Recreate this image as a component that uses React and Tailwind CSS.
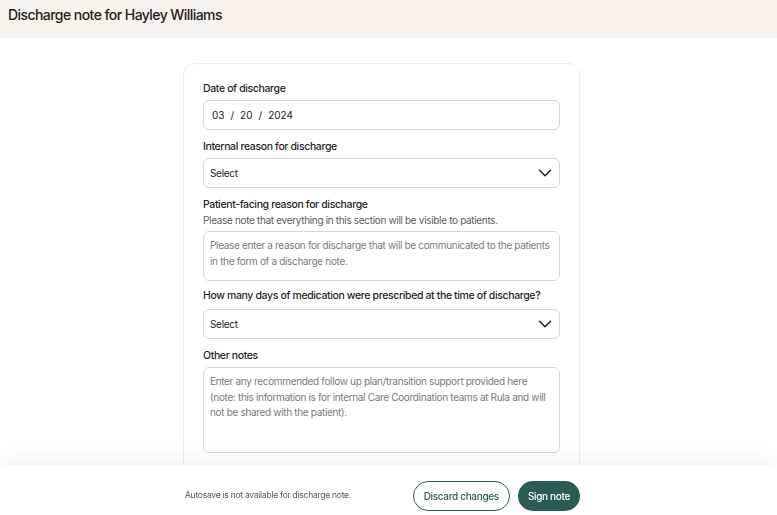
import { ChevronDown } from "lucide-react"

const font = { fontFamily: "Inter, 'Liberation Sans', sans-serif" }

function Label({ children }) {
  return <div className="text-[10.5px] font-medium text-[#1f1f1f] leading-[14px] tracking-[-0.035em]">{children}</div>
}

function SelectBox() {
  return (
    <div className="h-[30px] rounded-md border border-[#d6d6d6] bg-white flex items-center justify-between pl-[6px] pr-[3px]">
      <span className="text-[10px] text-[#222] tracking-[-0.03em]">Select</span>
      <ChevronDown className="w-[22px] h-[22px] text-[#222]" strokeWidth={1.7} />
    </div>
  )
}

export default function App() {
  return (
    <div className="min-h-screen bg-white text-[#222]" style={font}>
      {/* Header */}
      <div className="h-[38px] bg-[#f5f2ef] flex items-center px-[8px]">
        <h1 className="text-[14px] font-medium tracking-[-0.04em] -mt-[9px]">Discharge note for Hayley Williams</h1>
      </div>

      {/* Form card */}
      <div className="flex justify-center pr-[14px] pt-[25px] pb-[80px]">
        <div className="w-[397px] rounded-xl border border-[#ececec] px-[19px] pt-[18px] pb-[20px] flex flex-col">
          <Label>Date of discharge</Label>
          <div className="mt-[4px] h-[30px] rounded-md border border-[#d6d6d6] flex items-center pl-[8px] text-[10px] text-[#222] gap-[6px]">
            <span>03</span><span>/</span><span>20</span><span>/</span><span>2024</span>
          </div>

          <div className="mt-[10px]"><Label>Internal reason for discharge</Label></div>
          <div className="mt-[4px]"><SelectBox /></div>

          <div className="mt-[10px]"><Label>Patient-facing reason for discharge</Label></div>
          <div className="mt-[1px] text-[10px] text-[#5c5c5c] leading-[14px] tracking-[-0.033em]">
            Please note that everything in this section will be visible to patients.
          </div>
          <div className="mt-[4px] h-[50px] rounded-md border border-[#d6d6d6] px-[6px] pt-[5px] text-[10px] leading-[16px] text-[#7a7a7a] tracking-[-0.033em]">
            Please enter a reason for discharge that will be communicated to the patients in the form of a discharge note.
          </div>

          <div className="mt-[8px]"><Label>How many days of medication were prescribed at the time of discharge?</Label></div>
          <div className="mt-[6px]"><SelectBox /></div>

          <div className="mt-[10px]"><Label>Other notes</Label></div>
          <div className="mt-[4px] h-[86px] rounded-md border border-[#d6d6d6] px-[6px] pt-[6px] text-[10px] leading-[15.5px] text-[#7a7a7a] tracking-[-0.033em]">
            Enter any recommended follow up plan/transition support provided here (note: this information is for internal Care Coordination teams at Rula and will not be shared with the patient).
          </div>
        </div>
      </div>

      {/* Footer */}
      <div className="fixed bottom-0 left-0 right-0 h-[50px] bg-white shadow-[0_-8px_18px_rgba(0,0,0,0.045)] flex justify-center pr-[14px] pt-[16px]">
        <div className="w-[397px] flex items-start justify-between">
          <span className="mt-[8px] ml-[2px] text-[8.5px] leading-[12px] text-[#555] tracking-[-0.03em]">Autosave is not available for discharge note.</span>
          <div className="flex items-center gap-[8px]">
            <button className="h-[30px] px-[10px] rounded-full border border-[#2b5b52] text-[10px] font-medium text-[#2b5b52] tracking-[-0.033em]">Discard changes</button>
            <button className="h-[30px] px-[10px] rounded-full bg-[#2b5b52] text-[10px] font-medium text-white tracking-[-0.033em]">Sign note</button>
          </div>
        </div>
      </div>
    </div>
  )
}
